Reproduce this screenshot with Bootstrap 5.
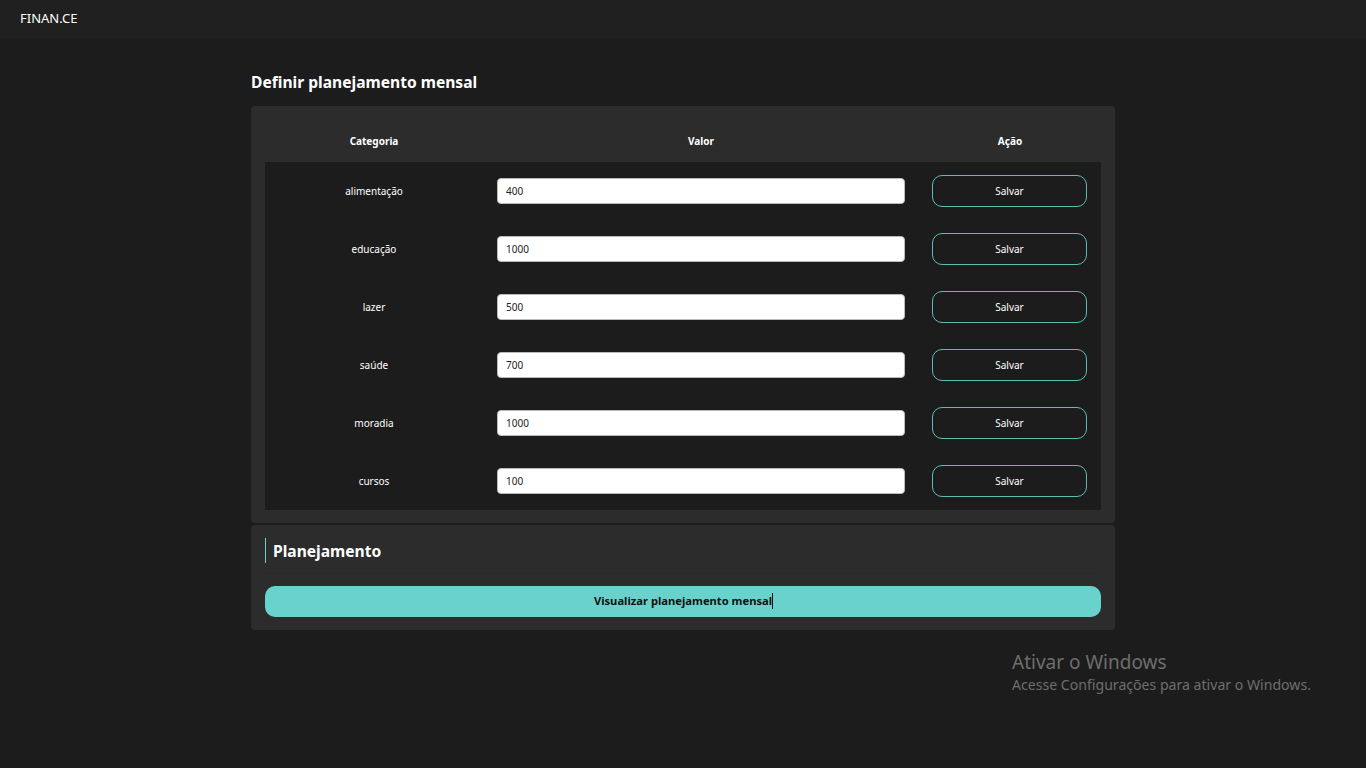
<!doctype html>
<html lang="pt-BR">
<head>
  <meta charset="utf-8">
  <title>FINAN.CE</title>
  <link href="https://cdn.jsdelivr.net/npm/bootstrap@5.3.0/dist/css/bootstrap.min.css" rel="stylesheet">
  <style>
    body { background: #1c1c1c; color: #fff; font-family: "Noto Sans", "Open Sans", sans-serif; font-size: 10px; min-height: 768px; overflow: hidden; }
    .top-bar { background: #202020; height: 38px; padding: 0 20px; }
    .brand-name { color: #fff; font-size: 13px; padding: 0; margin: 0; }
    .page-wrap { width: 864px; margin: 0 auto; padding-top: 34px; }
    .page-title { font-size: 15.6px; font-weight: 700; line-height: 20px; margin: 0 0 14px; color: #fff; }
    .panel-box { background: #2c2c2c; border: 0; border-radius: 4px; padding: 14px 14px 13px; color: #fff; margin-bottom: 2px; }
    .panel-low { padding-top: 13px; }
    .plan-table { width: 100%; table-layout: fixed; margin: 0; --bs-table-bg: transparent; --bs-table-color: #fff; }
    .plan-table th { border: 0; height: 42px; padding: 0; text-align: center; vertical-align: middle; font-size: 10px; font-weight: 700; color: #fff; }
    .plan-table td { border: 0; height: 58px; padding: 0 14px; text-align: center; vertical-align: middle; background: #1c1c1c; color: #fff; font-size: 10px; }
    .plan-table td:last-child { padding-left: 13px; }
    .value-input { height: 26px; border-radius: 4px; border: 1px solid #bbb; background: #fff; color: #222; font-size: 10px; padding: 0 8px; box-shadow: none; }
    .save-btn { display: block; width: 155px; height: 32px; margin-left: auto; padding: 0; border: 1px solid #5cbdb8; border-radius: 10px; background: transparent; color: #fff; font-size: 10px; }
    .section-head { height: 36px; margin-bottom: 12px; border-bottom: 1px solid #292929; }
    .section-title { border-left: 1px solid #69d2cd; padding-left: 7px; height: 25px; line-height: 27px; font-size: 15.6px; font-weight: 700; margin: 0; color: #fff; }
    .view-btn { display: block; width: 100%; height: 31px; padding: 0; border: 0; border-radius: 10px; background: #69d2cd; color: #111; font-size: 11.2px; font-weight: 700; }
    .text-caret { display: inline-block; width: 1px; height: 16px; background: #111; vertical-align: -4px; margin-right: -1px; }
    .win-mark { position: absolute; left: 1012px; top: 649px; color: #6e6e6e; pointer-events: none; }
    .win-mark-title { font-size: 19px; line-height: 26px; }
    .win-mark-sub { font-size: 14.1px; line-height: 20px; }
  </style>
</head>
<body>
  <nav class="top-bar d-flex align-items-center">
    <span class="brand-name">FINAN.CE</span>
  </nav>

  <main class="page-wrap">
    <h2 class="page-title">Definir planejamento mensal</h2>

    <section class="panel-box">
      <table class="table plan-table">
        <colgroup>
          <col style="width: 218px">
          <col style="width: 436px">
          <col style="width: 182px">
        </colgroup>
        <thead>
          <tr><th>Categoria</th><th>Valor</th><th>Ação</th></tr>
        </thead>
        <tbody id="planRows"></tbody>
      </table>
    </section>

    <section class="panel-box panel-low">
      <div class="section-head">
        <h3 class="section-title">Planejamento</h3>
      </div>
      <button class="view-btn" type="button">Visualizar planejamento mensal<span class="text-caret"></span></button>
    </section>
  </main>

  <div class="win-mark">
    <div class="win-mark-title">Ativar o Windows</div>
    <div class="win-mark-sub">Acesse Configurações para ativar o Windows.</div>
  </div>

  <script src="https://cdn.jsdelivr.net/npm/bootstrap@5.3.0/dist/js/bootstrap.bundle.min.js"></script>
  <script>
    const rows = [
      ["alimentação", 400],
      ["educação", 1000],
      ["lazer", 500],
      ["saúde", 700],
      ["moradia", 1000],
      ["cursos", 100]
    ];
    document.getElementById("planRows").innerHTML = rows.map(r => `
      <tr>
        <td>${r[0]}</td>
        <td><input class="form-control value-input" type="text" value="${r[1]}"></td>
        <td><button class="save-btn" type="button">Salvar</button></td>
      </tr>`).join("");
  </script>
</body>
</html>
